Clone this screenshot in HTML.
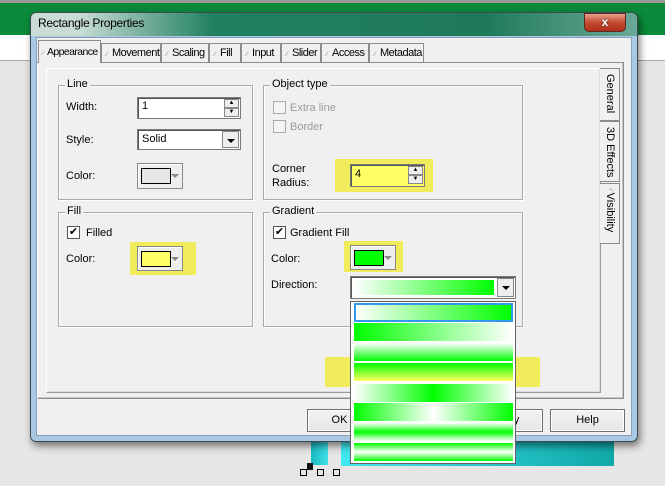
<!DOCTYPE html>
<html><head><style>
*{margin:0;padding:0;box-sizing:border-box}
body{width:665px;height:486px;overflow:hidden;background:#e6e6e6;position:relative;font-family:"Liberation Sans",sans-serif;font-size:11px;color:#000}
.a{position:absolute}
.grp{position:absolute;border:1px solid #a9a9a9;box-shadow:inset 1px 1px 0 #fff,1px 1px 0 #fff}
.grp>.t{position:absolute;top:-8px;left:6px;background:#f0f0f0;padding:0 2px;font-size:11px}
.tab{position:absolute;top:43px;height:19px;border:1px solid #8c8c8c;border-bottom:none;background:#f0f0f0;font-size:11px;letter-spacing:-0.5px;line-height:18px;padding-left:4px;white-space:nowrap;overflow:hidden}
.tab i{font-style:normal;color:#b0b0b0;font-size:6px;margin-right:4px;letter-spacing:0}
.edit{position:absolute;background:#fff;border:1px solid #7a7a7a;box-shadow:inset 1px 1px 0 #555;font-size:11px;padding:2px 4px}
.spin{position:absolute;right:1px;width:15px;height:9px;border:1px solid #888;background:#eee;font-size:6px;text-align:center;line-height:7px}
.dd{position:absolute;right:1px;top:1px;bottom:1px;width:17px;background:#eee;border:1px solid #888}
.dd:after{content:"";position:absolute;left:4px;top:7px;border-left:4px solid transparent;border-right:4px solid transparent;border-top:4px solid #000}
.cb{position:absolute;width:13px;height:13px;border:1px solid #555;background:#fff;font-size:11px;line-height:11px;text-align:center}
.cbd{border-color:#aaa;background:#f4f4f4}
.cbtn{position:absolute;border:1px solid #888;background:#eee;box-shadow:inset 1px 1px 0 #fff}
.cbtn .sw{position:absolute;left:3px;top:4px;width:30px;height:16px;border:1px solid #000}
.cbtn:after{content:"";position:absolute;right:3px;top:10px;border-left:4px solid transparent;border-right:4px solid transparent;border-top:4px solid #888}
.hl{position:absolute;background:#f0ec5c}
.btn{position:absolute;top:409px;height:23px;border:1px solid #707070;background:linear-gradient(#f2f2f2,#e6e6e6);box-shadow:inset 0 0 0 1px #fff;text-align:center;line-height:21px;font-size:11px}
.it{position:absolute;left:3px;width:159px;height:18px}
.vt{position:absolute;left:600px;width:20px;border:1px solid #8c8c8c;border-left:none;background:#f0f0f0}
.vt span{position:absolute;left:4px;top:5px;writing-mode:vertical-rl;font-size:11px;white-space:nowrap}
</style></head><body>
<div class="a" style="left:0;top:0;width:665px;height:3px;background:#9a9a9a"></div>
<div class="a" style="left:0;top:3px;width:665px;height:32px;background:#0a8a3a"></div>
<div class="a" style="left:0;top:35px;width:665px;height:26px;background:#fff;border-bottom:1px solid #aaa"></div>
<div class="a" style="left:30px;top:130px;width:4px;height:270px;background:#b8c8d8"></div>
<div class="a" style="left:311px;top:437px;width:17px;height:28px;background:linear-gradient(90deg,#18b8c0,#40e0e8)"></div>
<div class="a" style="left:341px;top:437px;width:273px;height:29px;background:linear-gradient(90deg,#40e8f0,#10a8a8)"></div>
<div class="a" style="left:300px;top:469px;width:7px;height:7px;border:1px solid #000"></div>
<div class="a" style="left:307px;top:463px;width:6px;height:7px;background:#111"></div>
<div class="a" style="left:317px;top:469px;width:7px;height:7px;border:1px solid #000"></div>
<div class="a" style="left:333px;top:469px;width:7px;height:7px;border:1px solid #000"></div>
<div class="a" style="left:30px;top:12px;width:608px;height:430px;border-radius:6px;border:1px solid #3a4a50;background:linear-gradient(90deg,#c8dcd4 0,#c8dcd4 8%,#208060 30%,#1f7a5a 75%,#6aa898 100%);box-shadow:2px 4px 8px rgba(0,0,0,.5)"></div>
<div class="a" style="left:31px;top:36px;width:606px;height:405px;border-radius:0 0 6px 6px;background:#a8c8e6"></div>
<div class="a" style="left:38px;top:16px;font-size:12px;color:#000;letter-spacing:-0.3px">Rectangle Properties</div>
<div class="a" style="left:584px;top:13px;width:42px;height:19px;border:1px solid #5a2a20;border-radius:0 0 5px 5px;background:linear-gradient(#e8a090,#c44a30 50%,#b03018);color:#fff;font-weight:bold;text-align:center;font-size:12px;line-height:16px;text-shadow:0 0 2px #333">x</div>
<div class="a" style="left:36px;top:37px;width:596px;height:399px;background:#f0f0f0;border:1px solid #8aa0b0"></div>
<div class="tab" style="left:101px;width:60px"><i>⁄⁄</i>Movement</div>
<div class="tab" style="left:161px;width:48px"><i>⁄⁄</i>Scaling</div>
<div class="tab" style="left:209px;width:32px"><i>⁄⁄</i>Fill</div>
<div class="tab" style="left:241px;width:40px"><i>⁄⁄</i>Input</div>
<div class="tab" style="left:281px;width:40px"><i>⁄⁄</i>Slider</div>
<div class="tab" style="left:321px;width:48px"><i>⁄⁄</i>Access</div>
<div class="tab" style="left:369px;width:55px"><i>⁄⁄</i>Metadata</div>
<div class="a" style="left:37px;top:62px;width:587px;height:337px;border:1px solid #8c8c8c;border-top-color:#fff;border-left-color:#fff;box-shadow:inset -1px -1px 0 #c8c8c8"></div>
<div class="a" style="left:37px;top:62px;width:587px;height:1px;background:#8c8c8c"></div>
<div class="tab" style="left:38px;top:40px;height:23px;width:63px;border-color:#8c8c8c;line-height:22px;z-index:2;padding-left:3px;font-size:10.5px;letter-spacing:-0.6px"><i style="margin-right:3px">⁄⁄</i>Appearance</div>
<div class="a" style="left:46px;top:68px;width:555px;height:325px;border:1px solid #9a9a9a;border-top-color:#fff;border-left-color:#fff;box-shadow:inset -1px -1px 0 #ddd"></div>
<div class="vt" style="top:68px;height:53px;z-index:2"><span>General</span></div>
<div class="vt" style="top:121px;height:61px"><span>3D Effects</span></div>
<div class="vt" style="top:183px;height:61px"><span><i style="font-style:normal;color:#aaa;font-size:6px">⁄⁄ </i>Visibility</span></div>
<div class="grp" style="left:58px;top:85px;width:195px;height:115px"><div class="t">Line</div></div>
<div class="a" style="left:66px;top:101px">Width:</div>
<div class="edit" style="left:137px;top:97px;width:104px;height:22px">1<div class="spin" style="top:1px">▲</div><div class="spin" style="top:10px">▼</div></div>
<div class="a" style="left:66px;top:134px">Style:</div>
<div class="edit" style="left:137px;top:129px;width:104px;height:21px;padding-top:3px">Solid<div class="dd"></div></div>
<div class="a" style="left:66px;top:170px">Color:</div>
<div class="cbtn" style="left:137px;top:163px;width:46px;height:26px"><div class="sw" style="background:#e6e6e6"></div></div>
<div class="grp" style="left:58px;top:212px;width:195px;height:115px"><div class="t">Fill</div></div>
<div class="cb" style="left:67px;top:226px">✔</div>
<div class="a" style="left:86px;top:227px">Filled</div>
<div class="a" style="left:66px;top:253px">Color:</div>
<div class="hl" style="left:130px;top:242px;width:66px;height:33px"></div>
<div class="cbtn" style="left:137px;top:246px;width:46px;height:25px"><div class="sw" style="background:#ffff66"></div></div>
<div class="grp" style="left:263px;top:85px;width:260px;height:115px"><div class="t">Object type</div></div>
<div class="cb cbd" style="left:273px;top:101px"></div>
<div class="a" style="left:290px;top:102px;color:#9a9a9a">Extra line</div>
<div class="cb cbd" style="left:273px;top:120px"></div>
<div class="a" style="left:290px;top:121px;color:#9a9a9a">Border</div>
<div class="a" style="left:272px;top:162px;line-height:14px">Corner<br>Radius:</div>
<div class="hl" style="left:335px;top:159px;width:98px;height:33px"></div>
<div class="edit" style="left:350px;top:164px;width:75px;height:23px;background:#ffff66;padding-top:3px">4<div class="spin" style="top:1px">▲</div><div class="spin" style="top:10px">▼</div></div>
<div class="grp" style="left:263px;top:212px;width:260px;height:115px"><div class="t">Gradient</div></div>
<div class="cb" style="left:273px;top:226px">✔</div>
<div class="a" style="left:290px;top:227px">Gradient Fill</div>
<div class="a" style="left:271px;top:253px">Color:</div>
<div class="hl" style="left:344px;top:241px;width:59px;height:31px"></div>
<div class="cbtn" style="left:350px;top:245px;width:46px;height:25px"><div class="sw" style="background:#00ff00"></div></div>
<div class="a" style="left:271px;top:279px">Direction:</div>
<div class="edit" style="left:350px;top:276px;width:166px;height:23px;padding:0"><div class="a" style="left:3px;top:3px;width:140px;height:15px;background:linear-gradient(90deg,#fff,#00ff00)"></div><div class="dd"></div></div>
<div class="hl" style="left:325px;top:357px;width:215px;height:30px"></div>
<div class="btn" style="left:307px;width:65px">OK</div>
<div class="btn" style="left:468px;width:75px">Apply</div>
<div class="btn" style="left:550px;width:75px">Help</div>
<div class="a" style="left:350px;top:301px;width:166px;height:163px;background:#fff;border:1px solid #646464">
<div class="it" style="top:1px;height:19px;border:2px solid #3399ee;background:linear-gradient(90deg,#fff,#00ff00)"></div>
<div class="it" style="top:21px;background:linear-gradient(90deg,#00ff00,#fff)"></div>
<div class="it" style="top:41px;background:linear-gradient(#fff,#00ff00)"></div>
<div class="it" style="top:61px;background:linear-gradient(#00ff00,#ffff60)"></div>
<div class="it" style="top:82px;background:linear-gradient(90deg,#fff,#00ff00,#fff)"></div>
<div class="it" style="top:101px;background:linear-gradient(90deg,#00ff00,#fff,#00ff00)"></div>
<div class="it" style="top:121px;background:linear-gradient(#fff,#00ff00,#fff)"></div>
<div class="it" style="top:141px;background:linear-gradient(#00ff00,#fff,#00ff00)"></div>
</div>
</body></html>
